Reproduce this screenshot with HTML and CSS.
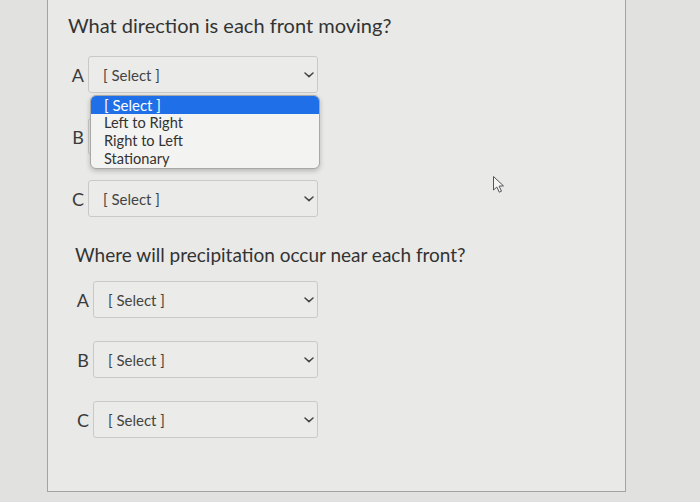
FILE: index.html
```html
<!DOCTYPE html>
<html lang="en">
<head>
<meta charset="utf-8">
<title>Quiz</title>
<link rel="stylesheet" href="styles.css">
</head>
<body>
<div class="page">
  <div class="card">
    <section class="group group-one">
      <h2 class="question">What direction is each front moving?</h2>
      <div class="rows">
        <div class="row">
          <span class="label">A</span>
          <div class="select">
            <span class="select-text">[ Select ]</span>
            <svg class="chev" width="10" height="6" viewBox="0 0 10 6"><path d="M1 1 L5 4.6 L9 1" fill="none" stroke="#444" stroke-width="1.5" stroke-linecap="round" stroke-linejoin="round"/></svg>
          </div>
          <ul class="menu">
            <li class="menu-item active">[ Select ]</li>
            <li class="menu-item">Left to Right</li>
            <li class="menu-item">Right to Left</li>
            <li class="menu-item">Stationary</li>
          </ul>
        </div>
        <div class="row">
          <span class="label">B</span>
          <div class="select">
            <span class="select-text">[ Select ]</span>
            <svg class="chev" width="10" height="6" viewBox="0 0 10 6"><path d="M1 1 L5 4.6 L9 1" fill="none" stroke="#444" stroke-width="1.5" stroke-linecap="round" stroke-linejoin="round"/></svg>
          </div>
        </div>
        <div class="row">
          <span class="label">C</span>
          <div class="select">
            <span class="select-text">[ Select ]</span>
            <svg class="chev" width="10" height="6" viewBox="0 0 10 6"><path d="M1 1 L5 4.6 L9 1" fill="none" stroke="#444" stroke-width="1.5" stroke-linecap="round" stroke-linejoin="round"/></svg>
          </div>
        </div>
      </div>
    </section>
    <section class="group group-two">
      <h2 class="question q2">Where will precipitation occur near each front?</h2>
      <div class="rows rows-two">
        <div class="row">
          <span class="label">A</span>
          <div class="select">
            <span class="select-text">[ Select ]</span>
            <svg class="chev" width="10" height="6" viewBox="0 0 10 6"><path d="M1 1 L5 4.6 L9 1" fill="none" stroke="#444" stroke-width="1.5" stroke-linecap="round" stroke-linejoin="round"/></svg>
          </div>
        </div>
        <div class="row">
          <span class="label">B</span>
          <div class="select">
            <span class="select-text">[ Select ]</span>
            <svg class="chev" width="10" height="6" viewBox="0 0 10 6"><path d="M1 1 L5 4.6 L9 1" fill="none" stroke="#444" stroke-width="1.5" stroke-linecap="round" stroke-linejoin="round"/></svg>
          </div>
        </div>
        <div class="row">
          <span class="label">C</span>
          <div class="select">
            <span class="select-text">[ Select ]</span>
            <svg class="chev" width="10" height="6" viewBox="0 0 10 6"><path d="M1 1 L5 4.6 L9 1" fill="none" stroke="#444" stroke-width="1.5" stroke-linecap="round" stroke-linejoin="round"/></svg>
          </div>
        </div>
      </div>
    </section>
    <svg class="cursor" width="15" height="19" viewBox="0 0 15 19"><path d="M1.5 1.5 L1.5 15 L4.8 12 L7.3 17.2 L9.5 16.2 L7.1 11.1 L11.5 10.9 Z" fill="#f4f4f4" stroke="#555" stroke-width="1" stroke-linejoin="round"/></svg>
  </div>
</div>
</body>
</html>
```
FILE: styles.css
```css
html, body {
  margin: 0;
  padding: 0;
}
body {
  background: #e1e1df;
  font-family: Lato, "Open Sans", "Liberation Sans", sans-serif;
  color: #3a3a3a;
  width: 700px;
  height: 502px;
  overflow: hidden;
}
.page {
  padding-left: 47px;
}
.card {
  position: relative;
  width: 579px;
  height: 492px;
  box-sizing: border-box;
  background: #e9e9e7;
  border: 1px solid #a3a3a3;
  border-top: none;
  padding: 13px 0 0 20px;
}
.question {
  margin: 0;
  font-weight: 400;
  font-size: 20px;
  line-height: 24px;
  color: #333;
}
.q2 {
  font-size: 19px;
  line-height: 24px;
  margin-left: 7px;
}
.rows {
  display: flex;
  flex-direction: column;
  gap: 25px;
  margin-top: 19px;
}
.rows-two {
  gap: 23px;
  margin-top: 14px;
  margin-left: 5px;
}
.group-two {
  margin-top: 26px;
}
.row {
  position: relative;
  display: flex;
  align-items: center;
  height: 37px;
}
.label {
  width: 16px;
  padding-right: 4px;
  text-align: right;
  font-size: 18px;
  color: #3a3a3a;
}
.select {
  box-sizing: border-box;
  width: 230px;
  height: 37px;
  border: 1px solid #c9c9c7;
  border-radius: 3px;
  background: #ebebe9;
  display: flex;
  align-items: center;
  justify-content: space-between;
  padding: 0 3px 0 14px;
}
.rows-two .select {
  width: 225px;
}
.select-text {
  font-size: 15px;
  color: #444;
}
.chev {
  display: block;
}
.menu {
  position: absolute;
  left: 22px;
  top: 39px;
  width: 228px;
  margin: 0;
  padding: 0;
  list-style: none;
  background: #f3f3f2;
  border: 1px solid #a8a8a8;
  border-radius: 6px;
  box-shadow: 0 2px 5px rgba(0, 0, 0, 0.22);
  overflow: hidden;
  z-index: 2;
}
.menu-item {
  font-size: 14.6px;
  line-height: 18px;
  height: 18px;
  padding-left: 13px;
  color: #333;
}
.menu-item.active {
  background: #1f6fe9;
  color: #fff;
  font-size: 15px;
}
.cursor {
  position: absolute;
  left: 444px;
  top: 175px;
}
```
